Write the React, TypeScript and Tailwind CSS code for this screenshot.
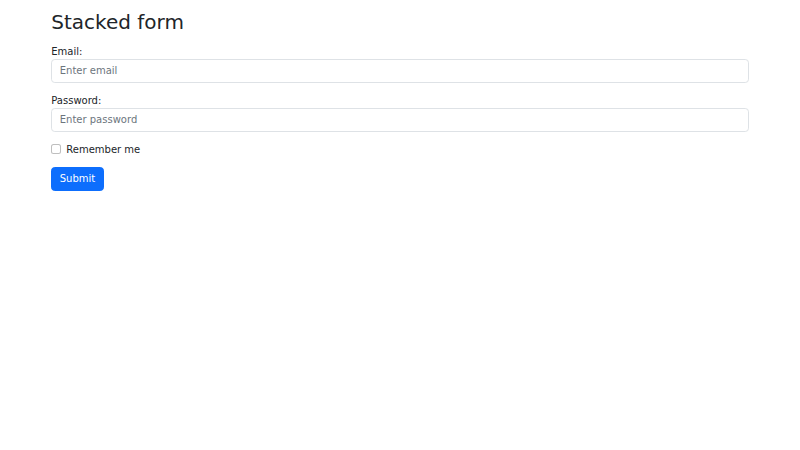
import React, { useState } from 'react';

const App: React.FC = () => {
  const [email, setEmail] = useState('');
  const [pwd, setPwd] = useState('');
  const [remember, setRemember] = useState(false);

  return (
    <div className="min-h-screen bg-white text-[#212529] font-['DejaVu_Sans',sans-serif] text-[10px] leading-[15px]">
      <div className="w-[712.5px] mx-auto px-[7.5px] pt-[10px]">
        <h2 className="text-[20px] leading-[24px] font-normal mb-[10px]">Stacked form</h2>
        <form onSubmit={(e) => e.preventDefault()}>
          <div className="mb-[10px]">
            <label htmlFor="email" className="block">Email:</label>
            <input
              id="email"
              type="email"
              value={email}
              onChange={(e) => setEmail(e.target.value)}
              placeholder="Enter email"
              className="block w-full h-[23.75px] px-[7.5px] border-[0.625px] border-[#dee2e6] rounded-[3.75px] text-[10px] leading-[15px] placeholder:text-[#6c757d] outline-none"
            />
          </div>
          <div className="mb-[10px]">
            <label htmlFor="pwd" className="block">Password:</label>
            <input
              id="pwd"
              type="password"
              value={pwd}
              onChange={(e) => setPwd(e.target.value)}
              placeholder="Enter password"
              className="block w-full h-[23.75px] px-[7.5px] border-[0.625px] border-[#dee2e6] rounded-[3.75px] text-[10px] leading-[15px] placeholder:text-[#6c757d] outline-none"
            />
          </div>
          <div className="mb-[10px] min-h-[15px]">
            <label className="flex items-start gap-[5px]">
              <input
                type="checkbox"
                checked={remember}
                onChange={(e) => setRemember(e.target.checked)}
                className="appearance-none w-[10px] h-[10px] mt-[2.5px] border-[0.625px] border-[rgba(0,0,0,0.25)] rounded-[2.5px] bg-white checked:bg-[#0d6efd]"
              />
              <span>Remember me</span>
            </label>
          </div>
          <button
            type="submit"
            className="bg-[#0d6efd] text-white px-[7.5px] py-[3.75px] border-[0.625px] border-[#0d6efd] rounded-[3.75px] text-[10px] leading-[15px]"
          >
            Submit
          </button>
        </form>
      </div>
    </div>
  );
};

export default App;
